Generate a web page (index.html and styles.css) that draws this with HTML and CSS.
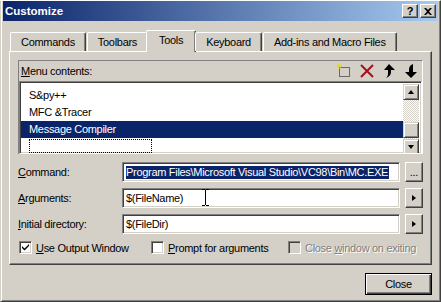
FILE: index.html
```html
<!DOCTYPE html>
<html lang="en">
<head>
    <meta charset="UTF-8">
    <title>Customize</title>
    <link rel="stylesheet" href="styles.css">
</head>
<body>
    <div class="window">
        <div class="titlebar">
            <span class="title">Customize</span>
            <div class="caption">
                <span class="cap-btn help">?</span>
                <span class="cap-btn">
                    <svg width="8" height="7" viewBox="0 0 8 7"><path d="M0 0h2l2 2 2-2h2L5 3.5 8 7H6L4 5 2 7H0l3-3.5z" fill="#000"/></svg>
                </span>
            </div>
        </div>

        <div class="content">
            <div class="tabs">
                <div class="tab">Commands</div>
                <div class="tab">Toolbars</div>
                <div class="tab active">Tools</div>
                <div class="tab">Keyboard</div>
                <div class="tab">Add-ins and Macro Files</div>
            </div>

            <div class="panel">
                <div class="menu">
                    <div class="menu-head">
                        <span><u>M</u>enu contents:</span>
                        <div class="icons">
                            <svg class="ico" width="14" height="14" viewBox="0 0 14 14">
                                <rect x="2.5" y="3.5" width="10" height="9" fill="none" stroke="#000" stroke-dasharray="1 1"/>
                                <path d="M2 0v5M0 2h5M0.5 0.5l3 3M3.5 0.5l-3 3" stroke="#e8d800" stroke-width="1"/>
                            </svg>
                            <svg class="ico" width="14" height="14" viewBox="0 0 14 14">
                                <path d="M1 1l12 12M13 1L1 13" stroke="#a8101a" stroke-width="2"/>
                            </svg>
                            <svg class="ico" width="13" height="14" viewBox="0 0 13 14">
                                <path d="M6 0l6 6H8v2c0 3-2 5-5 6 2-2 2-3 2-6V6H1z" fill="#000"/>
                            </svg>
                            <svg class="ico" width="13" height="14" viewBox="0 0 13 14">
                                <path d="M8 0C5 1 4 3 4 6v2H0l6 6 6-6H8V6c0-3 0-4 0-6z" fill="#000"/>
                            </svg>
                        </div>
                    </div>
                    <div class="list">
                        <div class="rows">
                            <div class="row">S&amp;py++</div>
                            <div class="row">MFC &amp;Tracer</div>
                            <div class="row selected">Message Compiler</div>
                            <div class="row"><span class="focus-box"></span></div>
                        </div>
                        <div class="vscroll">
                            <span class="sbtn"><span class="tri-up"></span></span>
                            <span class="track grow"></span>
                            <span class="sbtn thumb"></span>
                            <span class="sbtn"><span class="tri-down"></span></span>
                        </div>
                    </div>
                </div>

                <div class="field-row first">
                    <label class="lbl"><u>C</u>ommand:</label>
                    <div class="field"><span class="sel">Program Files\Microsoft Visual Studio\VC98\Bin\MC.EXE</span></div>
                    <span class="btn small">...</span>
                </div>
                <div class="field-row">
                    <label class="lbl"><u>A</u>rguments:</label>
                    <div class="field">$(FileName)
                        <svg class="ibeam" width="7" height="17" viewBox="0 0 7 17"><path d="M0 0.5h3M4 0.5h3M3.5 1v15M0 16.5h3M4 16.5h3" stroke="#000" fill="none"/></svg>
                    </div>
                    <span class="btn small"><span class="tri-right"></span></span>
                </div>
                <div class="field-row">
                    <label class="lbl"><u>I</u>nitial directory:</label>
                    <div class="field">$(FileDir)</div>
                    <span class="btn small"><span class="tri-right"></span></span>
                </div>

                <div class="checks">
                    <div class="check c1">
                        <span class="box">
                            <svg width="7" height="7" viewBox="0 0 7 7"><path d="M0 2l2.5 2.5L7 0v2L2.5 6.5 0 4z" fill="#000"/></svg>
                        </span>
                        <span><u>U</u>se Output Window</span>
                    </div>
                    <div class="check c2">
                        <span class="box"></span>
                        <span><u>P</u>rompt for arguments</span>
                    </div>
                    <div class="check disabled">
                        <span class="box"></span>
                        <span>Close <u>w</u>indow on exiting</span>
                    </div>
                </div>
            </div>

            <div class="footer">
                <span class="btn default">Close</span>
            </div>
        </div>
    </div>
</body>
</html>
```

FILE: styles.css
```css
body {
    margin: 0;
    font-family: "Liberation Sans", Arial, sans-serif;
    font-size: 11px;
    letter-spacing: -0.3px;
    color: #000;
    background: #d4d0c8;
}

.window {
    width: 441px;
    height: 302px;
    box-sizing: border-box;
    border: 1px solid;
    border-color: #fff #404040 #404040 #d4d0c8;
    box-shadow: inset 1px 0 #fff, inset -1px -1px #808080;
    padding: 0 2px 2px 2px;
    background: #d4d0c8;
}

.titlebar {
    height: 20px;
    display: flex;
    align-items: center;
    justify-content: space-between;
    background: linear-gradient(to right, #0a246a, #a6caf0);
    padding: 0 2px 0 2px;
}
.title {
    color: #fff;
    font-weight: 700;
    font-size: 11.5px;
    letter-spacing: 0;
}
.caption {
    display: flex;
    gap: 1px;
}
.cap-btn {
    width: 14px;
    height: 12px;
    display: flex;
    align-items: center;
    justify-content: center;
    background: #d4d0c8;
    border: 1px solid;
    border-color: #fff #404040 #404040 #fff;
    box-shadow: inset -1px -1px #808080;
    font-weight: 700;
    font-size: 11px;
}
.cap-btn.help {
    margin-right: 1px;
}

.content {
    padding: 8px 6px 0 6px;
}

/* tabs */
.tabs {
    display: flex;
    align-items: flex-end;
    height: 22px;
    padding-left: 1px;
    position: relative;
    z-index: 1;
}
.tab {
    height: 18px;
    line-height: 18px;
    padding: 0 10px;
    border: 1px solid;
    border-bottom: 0;
    border-color: #fff #404040 #404040 #fff;
    border-radius: 2px 2px 0 0;
    box-shadow: inset -1px 0 #808080;
    margin-right: 1px;
}
.tab.active {
    height: 21px;
    line-height: 19px;
    margin: 0 -1px -1px -3px;
    padding: 0 12px;
    background: #d4d0c8;
}

.panel {
    height: 214px;
    box-sizing: border-box;
    border: 1px solid;
    border-color: #fff #404040 #404040 #fff;
    box-shadow: inset -1px -1px #808080;
    padding: 8px 8px 0 8px;
}

/* menu list */
.menu {
    border-top: 1px solid #808080;
    border-left: 1px solid #808080;
    border-right: 1px solid #fff;
}
.menu-head {
    height: 20px;
    display: flex;
    align-items: center;
    justify-content: space-between;
    padding: 0 4px 0 2px;
}
.icons {
    display: flex;
    align-items: center;
    gap: 9px;
}
.ico {
    display: block;
}
.list {
    height: 73px;
    box-sizing: border-box;
    display: flex;
    background: #fff;
    border: 1px solid;
    border-color: #808080 #fff #fff #808080;
    box-shadow: inset 1px 1px #404040, inset -1px -1px #d4d0c8;
    padding: 2px 2px 0 1px;
    overflow: hidden;
}
.rows {
    flex: 1;
    padding-top: 3px;
    overflow: hidden;
}
.row {
    height: 17px;
    line-height: 17px;
    padding-left: 8px;
    white-space: nowrap;
}
.row.selected {
    background: #0a246a;
    color: #fff;
}
.focus-box {
    display: block;
    width: 121px;
    height: 12px;
    margin-top: 1px;
    border: 1px dotted #000;
}
.vscroll {
    width: 16px;
    display: flex;
    flex-direction: column;
    background: repeating-conic-gradient(#d4d0c8 0 25%, #fff 0 50%) 0 0 / 2px 2px;
}
.sbtn {
    flex: none;
    width: 14px;
    height: 14px;
    display: flex;
    align-items: center;
    justify-content: center;
    background: #d4d0c8;
    border: 1px solid;
    border-color: #d4d0c8 #404040 #404040 #d4d0c8;
    box-shadow: inset 1px 1px #fff, inset -1px -1px #808080;
}
.track.grow {
    flex: none;
    height: 22px;
}
.thumb {
    margin-bottom: 1px;
}
.tri-up, .tri-down, .tri-right {
    width: 0;
    height: 0;
    border: 3.5px solid transparent;
}
.tri-up {
    border-bottom: 4px solid #000;
    border-top: 0;
}
.tri-down {
    border-top: 4px solid #000;
    border-bottom: 0;
}
.tri-right {
    border-left: 4px solid #000;
    border-right: 0;
}

/* fields */
.field-row {
    display: flex;
    align-items: center;
    margin-top: 6px;
    height: 20px;
}
.field-row.first {
    margin-top: 8px;
}
.lbl {
    width: 104px;
    flex: none;
}
.field {
    position: relative;
    width: 278px;
    height: 20px;
    box-sizing: border-box;
    background: #fff;
    border: 1px solid;
    border-color: #808080 #fff #fff #808080;
    box-shadow: inset 1px 1px #404040, inset -1px -1px #d4d0c8;
    padding: 2px 2px 0 3px;
    line-height: 15px;
    white-space: nowrap;
    overflow: hidden;
}
.sel {
    background: #0a246a;
    color: #fff;
    padding: 0 1px 1px 0;
}
.ibeam {
    position: absolute;
    left: 79px;
    top: 0;
}
.btn {
    display: flex;
    align-items: center;
    justify-content: center;
    box-sizing: border-box;
    background: #d4d0c8;
    border: 1px solid;
    border-color: #fff #404040 #404040 #fff;
    box-shadow: inset -1px -1px #808080;
}
.btn.small {
    width: 18px;
    height: 20px;
    margin-left: 5px;
    line-height: 1;
}

/* checkboxes */
.checks {
    display: flex;
    align-items: center;
    margin-top: 7px;
    padding-left: 1px;
    height: 13px;
}
.check {
    display: flex;
    align-items: center;
    gap: 4px;
    white-space: nowrap;
}
.c1 { width: 132px; }
.c2 { width: 137px; }
.box {
    width: 13px;
    height: 13px;
    box-sizing: border-box;
    display: flex;
    align-items: center;
    justify-content: center;
    background: #fff;
    border: 1px solid;
    border-color: #808080 #fff #fff #808080;
    box-shadow: inset 1px 1px #404040, inset -1px -1px #d4d0c8;
}
.check.disabled {
    color: #808080;
    text-shadow: 1px 1px #fff;
}
.check.disabled .box {
    background: #d4d0c8;
}

.footer {
    display: flex;
    justify-content: flex-end;
    padding-top: 8px;
}
.btn.default {
    width: 67px;
    height: 22px;
    border: 1px solid #000;
    box-shadow: inset 1px 1px #fff, inset -1px -1px #404040, inset -2px -2px #808080;
}
```
